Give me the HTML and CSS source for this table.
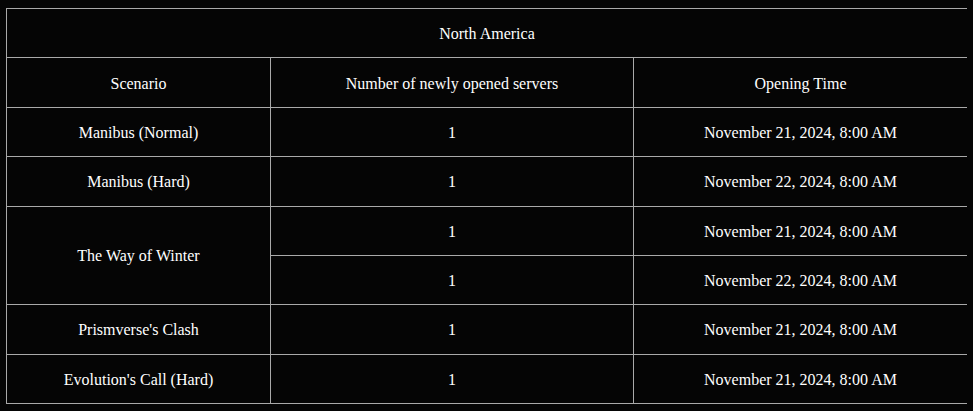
FILE: index.html
```html
<!DOCTYPE html>
<html>
<head>
<meta charset="utf-8">
<link rel="stylesheet" href="styles.css">
</head>
<body>
<table class="servers">
  <colgroup>
    <col class="c1">
    <col class="c2">
    <col class="c3">
  </colgroup>
  <tr><td colspan="3">North America</td></tr>
  <tr><td>Scenario</td><td>Number of newly opened servers</td><td>Opening Time</td></tr>
  <tr><td>Manibus (Normal)</td><td>1</td><td>November 21, 2024, 8:00 AM</td></tr>
  <tr><td>Manibus (Hard)</td><td>1</td><td>November 22, 2024, 8:00 AM</td></tr>
  <tr><td rowspan="2">The Way of Winter</td><td>1</td><td>November 21, 2024, 8:00 AM</td></tr>
  <tr><td>1</td><td>November 22, 2024, 8:00 AM</td></tr>
  <tr><td>Prismverse's Clash</td><td>1</td><td>November 21, 2024, 8:00 AM</td></tr>
  <tr><td>Evolution's Call (Hard)</td><td>1</td><td>November 21, 2024, 8:00 AM</td></tr>
</table>
</body>
</html>
```
FILE: styles.css
```css
html, body {
  background: #050505;
}
body {
  margin: 8px 6px;
  font-family: "Liberation Serif", "Times New Roman", serif;
  font-size: 16px;
  color: #ffffff;
}
.servers {
  width: 961px;
  border-collapse: collapse;
  table-layout: fixed;
}
.c1 { width: 264px; }
.c2 { width: 363px; }
.c3 { width: 334px; }
.servers td {
  border: 1px solid #a9a9a9;
  text-align: center;
  vertical-align: middle;
  padding: 2px 0 0;
  height: 46.375px;
  line-height: 18px;
}
```
